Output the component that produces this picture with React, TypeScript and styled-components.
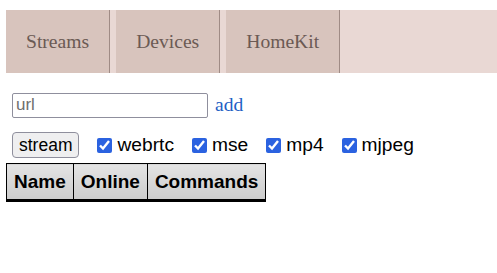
import styled, { createGlobalStyle } from "styled-components";

const GlobalStyle = createGlobalStyle`
  body {
    margin: 0;
    background: #fff;
    font-family: "Liberation Serif", "Times New Roman", serif;
  }
`;

const tabs = ["Streams", "Devices", "HomeKit"];
const modes = ["webrtc", "mse", "mp4", "mjpeg"];

const App = () => {
  return (
    <SPage>
      <GlobalStyle />
      <SNav>
        {tabs.map((t) => (
          <STab key={t}>{t}</STab>
        ))}
      </SNav>
      <SForm>
        <SRow>
          <SUrlInput type="text" placeholder="url" />
          <SLink href="#">add</SLink>
        </SRow>
        <SRow $gap={18}>
          <SButton>stream</SButton>
          <SChecks>
            {modes.map((m) => (
              <SCheck key={m}>
                <input type="checkbox" defaultChecked />
                {m}
              </SCheck>
            ))}
          </SChecks>
        </SRow>
      </SForm>
      <STable>
        <thead>
          <tr>
            <th>Name</th>
            <th>Online</th>
            <th>Commands</th>
          </tr>
        </thead>
      </STable>
    </SPage>
  );
};
export default App;

const SPage = styled.div`
  padding: 10px 0 0 6px;
`;

const SNav = styled.nav`
  display: flex;
  height: 63px;
  background-color: #e9d8d4;
`;

const STab = styled.a`
  display: flex;
  align-items: center;
  padding: 0 20px;
  margin-right: 6px;
  font-size: 19.6px;
  color: #6b5a54;
  background-color: #d8c4bd;
  border-right: 1px solid #9f8b85;
  cursor: pointer;
`;

const SForm = styled.div`
  padding: 19px 0 0 6px;
  display: flex;
  flex-direction: column;
  gap: 14px;
`;

const SRow = styled.div<{ $gap?: number }>`
  display: flex;
  align-items: center;
  gap: ${(p) => p.$gap ?? 7}px;
  height: 26px;
`;

const SUrlInput = styled.input`
  box-sizing: border-box;
  width: 196px;
  height: 25px;
  padding: 0 3px;
  border: 1px solid #8f8f9d;
  border-radius: 2px;
  font-family: "Liberation Sans", Arial, sans-serif;
  font-size: 17px;

  &::placeholder {
    color: #6f6f6f;
  }
`;

const SLink = styled.a`
  font-size: 19.5px;
  color: #1f5fc4;
  text-decoration: none;
`;

const SButton = styled.button`
  box-sizing: border-box;
  height: 26px;
  padding: 0 6px;
  font-family: "Liberation Sans", Arial, sans-serif;
  font-size: 17.5px;
  color: #000;
  background: #efeff0;
  border: 1px solid #8f8f9d;
  border-radius: 4px;
`;

const SChecks = styled.div`
  display: flex;
  align-items: center;
  gap: 18px;
`;

const SCheck = styled.label`
  display: flex;
  align-items: center;
  gap: 5px;
  font-family: "Liberation Sans", Arial, sans-serif;
  font-size: 19.2px;
  color: #000;

  & input {
    width: 15px;
    height: 15px;
    margin: 0;
    accent-color: #2b62e0;
  }
`;

const STable = styled.table`
  margin-top: 5px;
  border-collapse: collapse;
  font-family: "Liberation Sans", Arial, sans-serif;

  & th {
    height: 35px;
    padding: 0 7px;
    font-size: 19px;
    font-weight: bold;
    color: #000;
    background: linear-gradient(#e4e4e4, #cccccc);
    border: 1px solid #000;
    border-bottom: 3px solid #000;
  }
`;
